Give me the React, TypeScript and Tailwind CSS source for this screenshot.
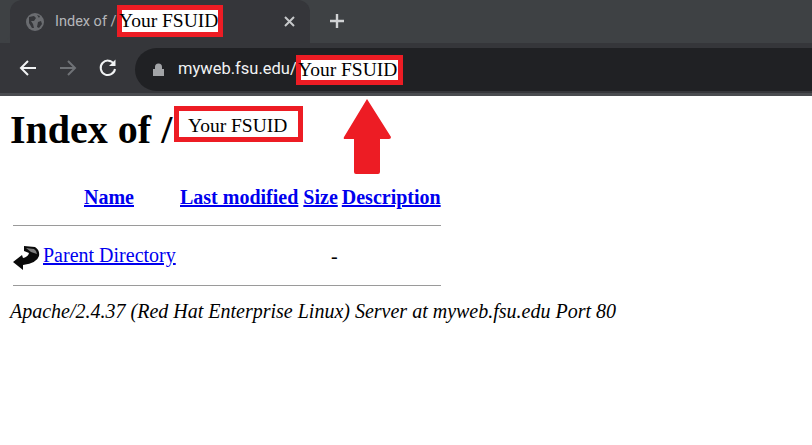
function Globe() {
  return (
    <svg width="18" height="18" viewBox="0 0 18 18" className="shrink-0">
      <circle cx="9" cy="9" r="9" fill="#6a6c70" />
      <path d="M3 4 L8 3 L10 5 L8 8 L5 8 L7 11 L8 15 L6 15 L3 10 Z" fill="#35363a" />
      <path d="M12 9 L15 8 L16 11 L13 15 L11 14 Z M11 2 L14 3 L13 5 Z" fill="#35363a" />
    </svg>
  );
}

function ToolbarIcons() {
  return (
    <div className="flex items-center gap-[20px] pl-[18px] shrink-0 w-[135px]">
      <svg width="20" height="20" viewBox="0 0 20 20" fill="none" stroke="#f1f3f4" strokeWidth="2">
        <path d="M18 10 H3 M10 3 L3 10 L10 17" />
      </svg>
      <svg width="20" height="20" viewBox="0 0 20 20" fill="none" stroke="#6f7276" strokeWidth="2">
        <path d="M2 10 H17 M10 3 L17 10 L10 17" />
      </svg>
      <svg width="20" height="20" viewBox="0 0 20 20" fill="none" stroke="#f1f3f4" strokeWidth="2">
        <path d="M16 6 A7.2 7.2 0 1 0 17 11" />
        <path d="M17.5 1.5 V8 H11 Z" fill="#f1f3f4" stroke="none" />
      </svg>
    </div>
  );
}

function ParentIcon() {
  return (
    <svg width="27" height="26" viewBox="0 0 27 26" className="-mr-[2px] inline-block align-middle">
      <path d="M11 1 L22 2 Q27 5 26 11 Q24 18 10 20 L10 25 L0 17 L9 10 L10 13 Q15 12 16 8 L11 6 Z" fill="#0a0a0a" />
      <path d="M13 3 L21 4 Q24 6 24 9 L18 7 Z" fill="#7d7d7d" />
    </svg>
  );
}

export default function App() {
  return (
    <div className="relative h-[445px] w-[812px] overflow-hidden bg-white font-['Liberation_Serif',serif] text-[20px] text-black">
      {/* browser chrome */}
      <div className="h-[96px] bg-[#35363a] border-b-[3px] border-[#4a4c50] font-['Roboto',sans-serif]">
        <div className="flex h-[43px] bg-[#3e4144]">
          <div className="w-[10px] rounded-br-xl bg-[#3e4144]" />
          <div className="flex w-[300px] items-center rounded-t-xl bg-[#35363a] pl-[16px] pr-[14px]">
            <Globe />
            <span className="ml-[11px] text-[14.5px] text-[#b5b7ba]">Index of /</span>
            <svg width="13" height="13" viewBox="0 0 13 13" className="ml-auto" stroke="#c6c8ca" strokeWidth="2">
              <path d="M2 2 L11 11 M11 2 L2 11" />
            </svg>
          </div>
          <svg width="18" height="18" viewBox="0 0 18 18" className="ml-[18px] mt-[12px]" stroke="#d0d2d4" strokeWidth="2.4">
            <path d="M9 2 V16 M2 9 H16" />
          </svg>
        </div>
        <div className="flex h-[50px] items-center">
          <ToolbarIcons />
          <div className="mb-[2px] flex h-[43px] flex-1 items-center self-end rounded-l-full bg-[#202124] pl-[18px]">
            <svg width="11" height="13" viewBox="0 0 11 13">
              <path d="M2 6 V4 A3.5 3.5 0 0 1 9 4 V6 H11 V13 H0 V6 Z" fill="#a2a4a7" />
            </svg>
            <span className="ml-[14px] text-[16.5px] text-[#f1f3f4]">myweb.fsu.edu/</span>
          </div>
        </div>
      </div>

      {/* apache index page */}
      <div className="pl-[10px]">
        <h1 className="mt-[9px] text-[40px] font-bold leading-[50px]">Index of /</h1>
        <table className="ml-[2px] mt-[14px] border-separate border-spacing-x-[1px] border-spacing-y-0">
          <tbody>
            <tr className="h-[56px]">
              <th className="w-[165px] pl-[27px] font-bold"><a className="text-[#0000ee] underline">Name</a></th>
              <th className="px-[1px] font-bold"><a className="text-[#0000ee] underline">Last modified</a></th>
              <th className="pl-[3px] pr-[3px] font-bold"><a className="text-[#0000ee] underline">Size</a></th>
              <th className="font-bold"><a className="text-[#0000ee] underline">Description</a></th>
            </tr>
            <tr>
              <td colSpan={4} className="pb-[2px]"><hr className="border-t border-[#9a9a9a]" /></td>
            </tr>
            <tr className="h-[57px]">
              <td className="whitespace-nowrap pb-[2px]">
                <ParentIcon /> <a className="text-[#0000ee] underline">Parent Directory</a>
              </td>
              <td />
              <td className="pb-[2px] pr-[3px] text-right">-</td>
              <td />
            </tr>
            <tr>
              <td colSpan={4}><hr className="border-t border-[#9a9a9a]" /></td>
            </tr>
          </tbody>
        </table>
        <address className="mt-[10px] whitespace-nowrap italic">
          Apache/2.4.37 (Red Hat Enterprise Linux) Server at myweb.fsu.edu Port 80
        </address>
      </div>

      {/* annotations drawn over the screenshot */}
      <div className="absolute left-[117px] top-[5px] flex h-[32px] w-[106px] items-center whitespace-nowrap border-[5px] border-[#ed1c24] bg-white text-[19.5px]">
        <span className="-ml-[3px]">Your FSUID</span>
      </div>
      <div className="absolute left-[296px] top-[55px] flex h-[30px] w-[107px] items-center whitespace-nowrap border-[5px] border-[#ed1c24] bg-white text-[19.5px]">
        <span className="-ml-[3px]">Your FSUID</span>
      </div>
      <div className="absolute left-[174px] top-[106px] flex h-[36px] w-[129px] items-center whitespace-nowrap border-[5px] border-[#ed1c24] bg-white pl-[9px] pt-[4px] text-[19.5px]">
        Your FSUID
      </div>
      <svg width="50" height="76" viewBox="0 0 50 76" className="absolute left-[343px] top-[99px]">
        <path d="M24 0 L48 38 Q48 40 46 40 L37 40 L37 73 Q37 75 35 75 L13 75 Q11 75 11 73 L11 40 L2 40 Q0 40 1 38 Z" fill="#ed1c24" />
      </svg>
    </div>
  );
}
